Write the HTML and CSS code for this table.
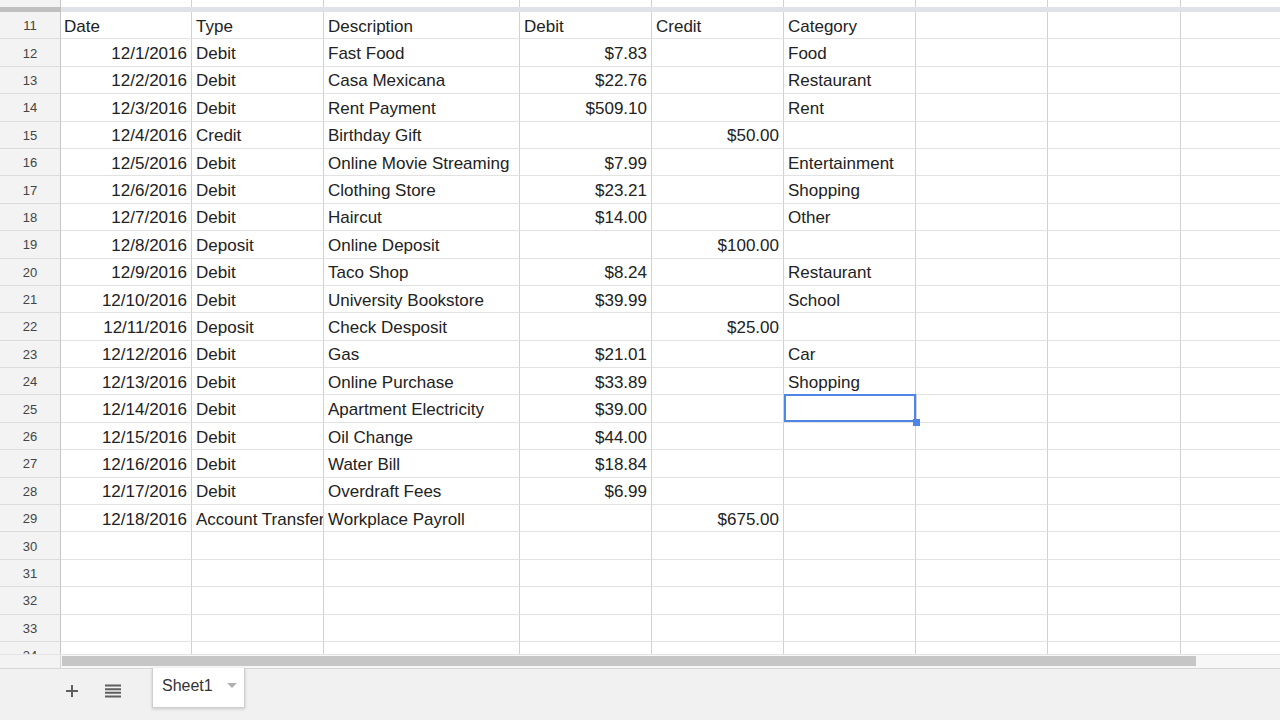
FILE: index.html
```html
<!DOCTYPE html>
<html>
<head>
<meta charset="utf-8">
<link rel="stylesheet" href="styles.css">
</head>
<body>
<div class="app">
  <div class="grid">
    <div class="row partial">
      <div class="rh"></div><div class="c"></div><div class="c"></div><div class="c"></div><div class="c"></div><div class="c"></div><div class="c"></div><div class="c"></div><div class="c"></div><div class="c last"></div>
    </div>
    <div class="freeze"><div class="freeze-rh"></div><div class="freeze-main"></div></div>
    <div class="rows">
      <div class="row"><div class="rh">11</div><div class="c">Date</div><div class="c">Type</div><div class="c">Description</div><div class="c">Debit</div><div class="c">Credit</div><div class="c">Category</div><div class="c"></div><div class="c"></div><div class="c last"></div></div>
      <div class="row"><div class="rh">12</div><div class="c r">12/1/2016</div><div class="c">Debit</div><div class="c">Fast Food</div><div class="c r">$7.83</div><div class="c r"></div><div class="c">Food</div><div class="c"></div><div class="c"></div><div class="c last"></div></div>
      <div class="row"><div class="rh">13</div><div class="c r">12/2/2016</div><div class="c">Debit</div><div class="c">Casa Mexicana</div><div class="c r">$22.76</div><div class="c r"></div><div class="c">Restaurant</div><div class="c"></div><div class="c"></div><div class="c last"></div></div>
      <div class="row"><div class="rh">14</div><div class="c r">12/3/2016</div><div class="c">Debit</div><div class="c">Rent Payment</div><div class="c r">$509.10</div><div class="c r"></div><div class="c">Rent</div><div class="c"></div><div class="c"></div><div class="c last"></div></div>
      <div class="row"><div class="rh">15</div><div class="c r">12/4/2016</div><div class="c">Credit</div><div class="c">Birthday Gift</div><div class="c r"></div><div class="c r">$50.00</div><div class="c"></div><div class="c"></div><div class="c"></div><div class="c last"></div></div>
      <div class="row"><div class="rh">16</div><div class="c r">12/5/2016</div><div class="c">Debit</div><div class="c">Online Movie Streaming</div><div class="c r">$7.99</div><div class="c r"></div><div class="c">Entertainment</div><div class="c"></div><div class="c"></div><div class="c last"></div></div>
      <div class="row"><div class="rh">17</div><div class="c r">12/6/2016</div><div class="c">Debit</div><div class="c">Clothing Store</div><div class="c r">$23.21</div><div class="c r"></div><div class="c">Shopping</div><div class="c"></div><div class="c"></div><div class="c last"></div></div>
      <div class="row"><div class="rh">18</div><div class="c r">12/7/2016</div><div class="c">Debit</div><div class="c">Haircut</div><div class="c r">$14.00</div><div class="c r"></div><div class="c">Other</div><div class="c"></div><div class="c"></div><div class="c last"></div></div>
      <div class="row"><div class="rh">19</div><div class="c r">12/8/2016</div><div class="c">Deposit</div><div class="c">Online Deposit</div><div class="c r"></div><div class="c r">$100.00</div><div class="c"></div><div class="c"></div><div class="c"></div><div class="c last"></div></div>
      <div class="row"><div class="rh">20</div><div class="c r">12/9/2016</div><div class="c">Debit</div><div class="c">Taco Shop</div><div class="c r">$8.24</div><div class="c r"></div><div class="c">Restaurant</div><div class="c"></div><div class="c"></div><div class="c last"></div></div>
      <div class="row"><div class="rh">21</div><div class="c r">12/10/2016</div><div class="c">Debit</div><div class="c">University Bookstore</div><div class="c r">$39.99</div><div class="c r"></div><div class="c">School</div><div class="c"></div><div class="c"></div><div class="c last"></div></div>
      <div class="row"><div class="rh">22</div><div class="c r">12/11/2016</div><div class="c">Deposit</div><div class="c">Check Desposit</div><div class="c r"></div><div class="c r">$25.00</div><div class="c"></div><div class="c"></div><div class="c"></div><div class="c last"></div></div>
      <div class="row"><div class="rh">23</div><div class="c r">12/12/2016</div><div class="c">Debit</div><div class="c">Gas</div><div class="c r">$21.01</div><div class="c r"></div><div class="c">Car</div><div class="c"></div><div class="c"></div><div class="c last"></div></div>
      <div class="row"><div class="rh">24</div><div class="c r">12/13/2016</div><div class="c">Debit</div><div class="c">Online Purchase</div><div class="c r">$33.89</div><div class="c r"></div><div class="c">Shopping</div><div class="c"></div><div class="c"></div><div class="c last"></div></div>
      <div class="row"><div class="rh">25</div><div class="c r">12/14/2016</div><div class="c">Debit</div><div class="c">Apartment Electricity</div><div class="c r">$39.00</div><div class="c r"></div><div class="c sel"><span class="handle"></span></div><div class="c"></div><div class="c"></div><div class="c last"></div></div>
      <div class="row"><div class="rh">26</div><div class="c r">12/15/2016</div><div class="c">Debit</div><div class="c">Oil Change</div><div class="c r">$44.00</div><div class="c r"></div><div class="c"></div><div class="c"></div><div class="c"></div><div class="c last"></div></div>
      <div class="row"><div class="rh">27</div><div class="c r">12/16/2016</div><div class="c">Debit</div><div class="c">Water Bill</div><div class="c r">$18.84</div><div class="c r"></div><div class="c"></div><div class="c"></div><div class="c"></div><div class="c last"></div></div>
      <div class="row"><div class="rh">28</div><div class="c r">12/17/2016</div><div class="c">Debit</div><div class="c">Overdraft Fees</div><div class="c r">$6.99</div><div class="c r"></div><div class="c"></div><div class="c"></div><div class="c"></div><div class="c last"></div></div>
      <div class="row"><div class="rh">29</div><div class="c r">12/18/2016</div><div class="c">Account Transfer</div><div class="c">Workplace Payroll</div><div class="c r"></div><div class="c r">$675.00</div><div class="c"></div><div class="c"></div><div class="c"></div><div class="c last"></div></div>
      <div class="row"><div class="rh">30</div><div class="c"></div><div class="c"></div><div class="c"></div><div class="c"></div><div class="c"></div><div class="c"></div><div class="c"></div><div class="c"></div><div class="c last"></div></div>
      <div class="row"><div class="rh">31</div><div class="c"></div><div class="c"></div><div class="c"></div><div class="c"></div><div class="c"></div><div class="c"></div><div class="c"></div><div class="c"></div><div class="c last"></div></div>
      <div class="row"><div class="rh">32</div><div class="c"></div><div class="c"></div><div class="c"></div><div class="c"></div><div class="c"></div><div class="c"></div><div class="c"></div><div class="c"></div><div class="c last"></div></div>
      <div class="row"><div class="rh">33</div><div class="c"></div><div class="c"></div><div class="c"></div><div class="c"></div><div class="c"></div><div class="c"></div><div class="c"></div><div class="c"></div><div class="c last"></div></div>
      <div class="row"><div class="rh">34</div><div class="c"></div><div class="c"></div><div class="c"></div><div class="c"></div><div class="c"></div><div class="c"></div><div class="c"></div><div class="c"></div><div class="c last"></div></div>
    </div>
  </div>
  <div class="hscroll">
    <div class="hs-corner"></div>
    <div class="hs-track"><div class="hs-thumb"></div></div>
  </div>
  <div class="bottombar">
    <div class="bb-btn add">
      <svg width="14" height="14" viewBox="0 0 14 14"><path d="M7 1v12M1 7h12" stroke="#5f5f5f" stroke-width="2"/></svg>
    </div>
    <div class="bb-btn list">
      <svg width="16" height="14" viewBox="0 0 16 14"><path d="M0 1.5h16M0 5.2h16M0 8.8h16M0 12.5h16" stroke="#5f5f5f" stroke-width="2"/></svg>
    </div>
    <div class="tab">
      <span class="tab-name">Sheet1</span>
      <svg class="tab-arrow" width="10" height="6" viewBox="0 0 10 6"><path d="M0 0h10L5 5z" fill="#b0b0b0"/></svg>
    </div>
  </div>
</div>
</body>
</html>
```
FILE: styles.css
```css
html, body {
  margin: 0;
  padding: 0;
  background: #ffffff;
  overflow: hidden;
}
.app {
  width: 1280px;
  height: 720px;
  display: flex;
  flex-direction: column;
  font-family: "Liberation Sans", Arial, sans-serif;
  color: #222222;
}
.grid {
  height: 654px;
  overflow: hidden;
  flex: none;
  display: flex;
  flex-direction: column;
}
.row {
  display: grid;
  grid-template-columns: 61px 131px 132px 196px 132px 132px 132px 132px 133px 1fr;
  height: 27.4px;
  flex: none;
}
.row.partial {
  height: 7px;
}
.rows {
  display: flex;
  flex-direction: column;
}
.rh {
  background: #f3f3f3;
  border-right: 1px solid #c6c6c6;
  border-bottom: 1px solid #dcdcdc;
  font-size: 13px;
  color: #444;
  display: flex;
  align-items: center;
  justify-content: center;
  box-sizing: border-box;
  padding-top: 1px;
}
.c {
  border-right: 1px solid #d2d2d2;
  border-bottom: 1px solid #e2e2e2;
  box-sizing: border-box;
  font-size: 17px;
  display: flex;
  align-items: center;
  padding: 3px 4px 0 4px;
  white-space: nowrap;
  overflow: hidden;
  position: relative;
}
.row > .c:nth-child(2) {
  padding-left: 3px;
}
.partial .c, .partial .rh {
  border-bottom: none;
}
.c.r {
  justify-content: flex-end;
}
.c.last {
  border-right: none;
}
.freeze {
  height: 5px;
  display: flex;
  flex: none;
}
.freeze-rh {
  width: 61px;
  background: #c0c0c0;
}
.freeze-main {
  flex: 1;
  background: #dfe3e9;
}
.c.sel {
  overflow: visible;
  box-shadow: inset 0 0 0 2px #4d86e6;
  margin-top: -1px;
  height: calc(100% + 1px);
  width: calc(100% + 1px);
  z-index: 2;
}
.handle {
  position: absolute;
  right: -4px;
  bottom: -4px;
  width: 7px;
  height: 7px;
  background: #4d86e6;
}
.hscroll {
  height: 14px;
  display: flex;
  flex: none;
  border-top: 1px solid #e4e4e4;
  box-sizing: border-box;
}
.hs-corner {
  width: 61px;
  background: #f3f3f3;
  border-right: 1px solid #d6d6d6;
  box-sizing: border-box;
}
.hs-track {
  flex: 1;
  background: #f7f7f7;
  padding: 1px 0 2px 1px;
  box-sizing: border-box;
  display: flex;
}
.hs-thumb {
  width: 1134px;
  background: #c6c6c6;
}
.bottombar {
  flex: 1;
  background: #f1f1f1;
  border-top: 1px solid #d6d6d6;
  display: flex;
  align-items: flex-start;
  padding-left: 58px;
  box-sizing: border-box;
}
.bb-btn {
  width: 28px;
  height: 44px;
  display: flex;
  align-items: center;
  justify-content: center;
}
.bb-btn.add {
  margin-right: 13px;
}
.bb-btn.list {
  margin-right: 25px;
}
.tab {
  margin-top: -1px;
  width: 93px;
  height: 40px;
  background: #ffffff;
  border: 1px solid #cfcfcf;
  border-top: none;
  box-shadow: 0 1px 3px rgba(0,0,0,0.18);
  box-sizing: border-box;
  display: flex;
  align-items: center;
  padding-left: 9px;
  padding-bottom: 4px;
}
.tab-name {
  font-size: 16px;
  color: #333;
}
.tab-arrow {
  margin-left: 14px;
}
```
